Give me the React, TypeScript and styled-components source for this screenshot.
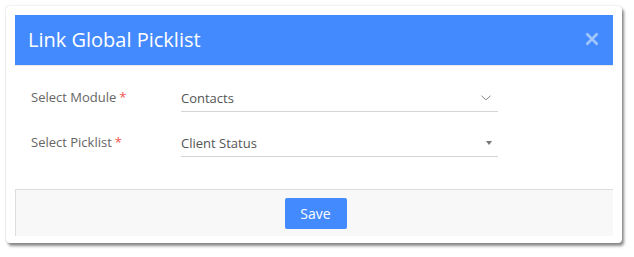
import React from 'react'
import styled, { createGlobalStyle } from 'styled-components'

const GlobalStyle = createGlobalStyle`
  html, body {
    margin: 0;
    padding: 0;
    background: #fff;
    font-family: 'Open Sans', 'Noto Sans', sans-serif;
  }
`

const Page = styled.div`
  padding: 6px;
`

const Dialog = styled.div`
  width: 616px;
  height: 237px;
  box-sizing: border-box;
  padding: 9px 9px 7px;
  background: #fff;
  border-radius: 4px;
  box-shadow: 0 0 2px rgba(0, 0, 0, 0.2), 2px 3px 3px rgba(0, 0, 0, 0.45);
  display: flex;
  flex-direction: column;
`

const Header = styled.div`
  height: 51px;
  box-sizing: border-box;
  background: #448aff;
  border-bottom: 1px solid #e8e8e8;
  display: flex;
  align-items: center;
  justify-content: space-between;
  padding: 0 14px 2px 13px;
`

const Title = styled.h3`
  margin: 0;
  font-size: 20px;
  font-weight: 400;
  color: #fff;
`

const CloseButton = styled.button`
  border: 0;
  background: none;
  padding: 0;
  width: 14px;
  height: 14px;
  display: flex;
  cursor: pointer;
`

const Body = styled.div`
  flex: 1;
  display: flex;
  flex-direction: column;
  gap: 15px;
  padding: 16px 16px 0;
`

const Row = styled.div`
  display: flex;
  align-items: center;
`

const Label = styled.label`
  width: 150px;
  font-size: 13px;
  color: #666;
`

const Required = styled.span`
  color: #ef5350;
  margin-left: 3px;
`

const Field = styled.div<{ $caretPad?: number }>`
  width: 317px;
  height: 30px;
  box-sizing: border-box;
  border-bottom: 1px solid #d4d4d4;
  display: flex;
  align-items: center;
  justify-content: space-between;
  font-size: 13px;
  color: #555;
  padding-top: 2px;
  padding-right: ${p => p.$caretPad ?? 7}px;
`

const Footer = styled.div`
  height: 47px;
  box-sizing: border-box;
  background: #f8f8f8;
  border-top: 1px solid #ddd;
  border-left: 1px solid #ddd;
  display: flex;
  justify-content: center;
  align-items: flex-start;
  padding-top: 8px;
`

const SaveButton = styled.button`
  width: 62px;
  height: 31px;
  margin-left: 2px;
  border: 0;
  border-radius: 2px;
  background: #448aff;
  color: #fff;
  font-family: inherit;
  font-size: 14px;
  cursor: pointer;
`

const Chevron = () => (
  <svg width="10" height="6" viewBox="0 0 10 6">
    <path d="M0.5 0.8 L5 4.8 L9.5 0.8" fill="none" stroke="#888" strokeWidth="1" />
  </svg>
)

const Caret = () => (
  <svg width="6" height="4" viewBox="0 0 6 4">
    <path d="M0 0 H6 L3 4 Z" fill="#777" />
  </svg>
)

const CloseIcon = () => (
  <svg width="14" height="14" viewBox="0 0 14 14">
    <path d="M1.5 1.5 L12.5 12.5 M12.5 1.5 L1.5 12.5" stroke="#a3c6fd" strokeWidth="2.6" />
  </svg>
)

const App = () => (
  <Page>
    <GlobalStyle />
    <Dialog>
      <Header>
        <Title>Link Global Picklist</Title>
        <CloseButton aria-label="close"><CloseIcon /></CloseButton>
      </Header>
      <Body>
        <Row>
          <Label>Select Module<Required>*</Required></Label>
          <Field>Contacts<Chevron /></Field>
        </Row>
        <Row>
          <Label>Select Picklist<Required>*</Required></Label>
          <Field $caretPad={6}>Client Status<Caret /></Field>
        </Row>
      </Body>
      <Footer>
        <SaveButton>Save</SaveButton>
      </Footer>
    </Dialog>
  </Page>
)

export default App
